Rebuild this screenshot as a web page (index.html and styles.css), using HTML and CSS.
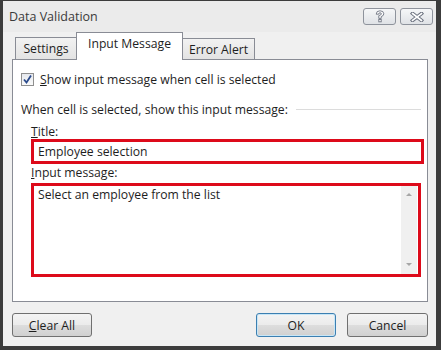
FILE: index.html
```html
<!DOCTYPE html>
<html lang="en">
<head>
    <meta charset="UTF-8">
    <title>Data Validation</title>
    <link rel="stylesheet" href="styles.css">
</head>
<body>
    <div class="dialog">
        <div class="titlebar">
            <span class="title">Data Validation</span>
            <div class="caption-buttons">
                <button class="caption-btn help">
                    <svg width="10" height="13" viewBox="0 0 10 13">
                        <path d="M1.2 4.2 Q1.2 0.8 5 0.8 Q8.8 0.8 8.8 3.8 Q8.8 5.8 6.2 6.6 L6.2 8.4 L3.8 8.4 L3.8 5.6 Q6.4 5 6.4 3.9 Q6.4 2.8 5 2.8 Q3.6 2.8 3.6 4.2 Z" fill="#fff" stroke="#6d7380" stroke-width="0.9"/>
                        <rect x="3.8" y="9.4" width="2.4" height="2.4" fill="#fff" stroke="#6d7380" stroke-width="0.9"/>
                    </svg>
                </button>
                <button class="caption-btn close">
                    <svg width="14" height="10" viewBox="0 0 14 10">
                        <path d="M2.5 1.5 L11.5 8.5 M11.5 1.5 L2.5 8.5" stroke="#6d7380" stroke-width="3.6" stroke-linecap="square"/>
                        <path d="M2.5 1.5 L11.5 8.5 M11.5 1.5 L2.5 8.5" stroke="#fff" stroke-width="1.6" stroke-linecap="square"/>
                    </svg>
                </button>
            </div>
        </div>

        <div class="content">
            <div class="tabs">
                <div class="tab settings">Settings</div>
                <div class="tab active">Input Message</div>
                <div class="tab error">Error Alert</div>
            </div>

            <div class="panel">
                <label class="check-row">
                    <span class="checkbox">
                        <svg width="11" height="11" viewBox="0 0 11 11">
                            <path d="M2 5.5 L4.5 8.5 L9 1.5" fill="none" stroke="#2a4a8c" stroke-width="1.8"/>
                        </svg>
                    </span>
                    <span><u>S</u>how input message when cell is selected</span>
                </label>

                <div class="group-title">
                    <span>When cell is selected, show this input message:</span>
                    <span class="rule"></span>
                </div>

                <div class="field">
                    <div class="field-label"><u>T</u>itle:</div>
                    <div class="highlight title-box">Employee selection</div>
                </div>

                <div class="field">
                    <div class="field-label second"><u>I</u>nput message:</div>
                    <div class="highlight message-box">
                        <span class="message-text">Select an employee from the list</span>
                        <div class="scrollbar">
                            <span class="arrow up"></span>
                            <span class="arrow down"></span>
                        </div>
                    </div>
                </div>
            </div>

            <div class="footer">
                <button class="btn"><u>C</u>lear All</button>
                <div class="footer-right">
                    <button class="btn default">OK</button>
                    <button class="btn">Cancel</button>
                </div>
            </div>
        </div>
    </div>
</body>
</html>
```

FILE: styles.css
```css
body {
    margin: 0;
    font-family: "Open Sans", "Noto Sans", sans-serif;
    font-size: 12.2px;
    color: #1e1e1e;
}

.dialog {
    width: 441px;
    height: 350px;
    box-sizing: border-box;
    background: #f0f0f0;
    border-style: solid;
    border-color: #3c3c3c;
    border-width: 1px 5px 4px 3px;
}

.titlebar {
    height: 31px;
    display: flex;
    align-items: center;
    justify-content: space-between;
    padding: 0 3px 0 6px;
    background: #ebebeb;
}

.title {
    font-size: 12.5px;
    color: #3a3a3a;
}

.caption-buttons {
    display: flex;
    gap: 4px;
    align-self: flex-start;
    margin-top: 7px;
}

.caption-btn {
    width: 33px;
    height: 17px;
    padding: 0;
    border: 1px solid #8e939c;
    border-radius: 3px;
    background: linear-gradient(#f6f7f8, #dfe2e6);
    display: flex;
    align-items: center;
    justify-content: center;
}

.content {
    padding: 0 8px 0 9px;
}

.tabs {
    display: flex;
    align-items: flex-end;
    padding-left: 3px;
    height: 27px;
    position: relative;
    z-index: 1;
}

.tab {
    box-sizing: border-box;
    height: 22px;
    display: flex;
    align-items: center;
    justify-content: center;
    border: 1px solid #898c95;
    border-bottom: none;
    background: linear-gradient(#f2f2f2, #e3e3e3);
}

.tab.settings {
    width: 61px;
    border-right: none;
}

.tab.error {
    width: 72px;
    height: 21px;
    border-left: none;
}

.tab.active {
    width: 107px;
    height: 28px;
    margin-bottom: -1px;
    padding-bottom: 6px;
    background: #fff;
}

.panel {
    box-sizing: border-box;
    height: 243px;
    background: #fff;
    border: 1px solid #898c95;
    padding: 13px 0 0 8px;
}

.check-row {
    display: flex;
    align-items: center;
    gap: 6px;
    height: 13px;
}

.checkbox {
    box-sizing: border-box;
    width: 13px;
    height: 13px;
    border: 1px solid #8f8f8f;
    background: linear-gradient(#e6e9ee, #fafafa);
    display: flex;
    align-items: center;
    justify-content: center;
}

.group-title {
    display: flex;
    align-items: center;
    gap: 8px;
    margin-top: 15px;
    padding-right: 6px;
}

.rule {
    flex: 1;
    border-top: 1px solid #dcdcdc;
}

.field {
    padding-left: 10px;
}

.field-label {
    margin-top: 6px;
    height: 16px;
    line-height: 16px;
}

.field-label.second {
    margin-top: 1px;
}

.highlight {
    box-sizing: border-box;
    border: 3px solid #dd0a1a;
    padding: 0 0 0 4px;
    color: #1e1e1e;
}

.title-box {
    width: 393px;
    height: 25px;
    margin-top: -1px;
    line-height: 19px;
}

.message-box {
    width: 390px;
    height: 94px;
    margin-top: 2px;
    display: flex;
    justify-content: space-between;
    padding-top: 1px;
    padding-right: 1px;
}

.message-text {
    line-height: 16px;
}

.scrollbar {
    width: 16px;
    margin-top: -1px;
    background: #f0f0f0;
    display: flex;
    flex-direction: column;
    justify-content: space-between;
    align-items: center;
    padding: 7px 0 8px;
}

.arrow {
    width: 0;
    height: 0;
    border-left: 3px solid transparent;
    border-right: 3px solid transparent;
}

.arrow.up {
    border-bottom: 3px solid #a6a6a6;
}

.arrow.down {
    border-top: 3px solid #a6a6a6;
}

.footer {
    display: flex;
    justify-content: space-between;
    margin-top: 11px;
}

.footer-right {
    display: flex;
    gap: 11px;
}

.btn {
    box-sizing: border-box;
    width: 81px;
    height: 24px;
    font-family: inherit;
    font-size: 12.2px;
    color: #1e1e1e;
    border: 1px solid #707070;
    border-radius: 3px;
    background: linear-gradient(#f4f4f4 0%, #ebebeb 50%, #dddddd 51%, #d0d0d0 100%);
    padding: 0;
}

.btn:first-child {
    width: 80px;
}

.btn.default {
    border-color: #3c7fb1;
    box-shadow: inset 0 0 0 1px #c7e6f7;
}
```
